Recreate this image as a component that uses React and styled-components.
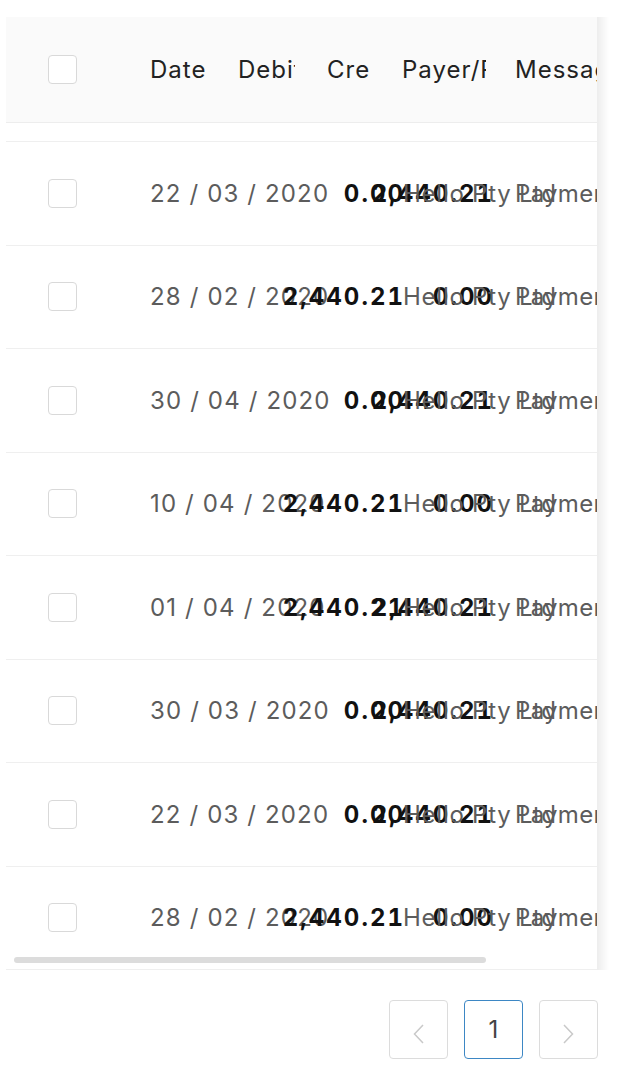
import styled, { createGlobalStyle } from 'styled-components'

const Global = createGlobalStyle`
  html, body { margin:0; padding:0; background:#fff; }
  body { font-family: Inter, "Noto Sans", sans-serif; -webkit-font-smoothing: antialiased; }
`

const Page = styled.div`width:620px; box-sizing:border-box; padding:17px 22px 0 6px;`

const Card = styled.div`
  position:relative; width:591px; background:#fff;
  &::after{content:''; position:absolute; top:0; bottom:0; right:-12px; width:12px; background:linear-gradient(to right, rgba(0,0,0,0.07), rgba(0,0,0,0));}
`
const Viewport = styled.div`overflow:hidden;`
const Table = styled.div`width:809px;`

const Head = styled.div`
  display:flex; align-items:center; height:106px; box-sizing:border-box;
  background:#fafafa; border-bottom:1px solid #ededed;
`
const HeadCell = styled.div`
  width:${p=>p.$w}px; flex:none; box-sizing:border-box; padding-right:${p=>p.$pad ?? 31}px;
  padding-left:${p=>p.$left || 0}px; display:flex; align-items:center;
`
const Label = styled.span`
  display:block; overflow:hidden; white-space:nowrap; font-size:24px; color:#222; letter-spacing:1px;
`
const Spacer = styled.div`height:19px; box-sizing:border-box; border-bottom:1px solid #efefef;`

const Row = styled.div`
  display:grid; grid-template-columns:144px 253px 89px 23px 300px; align-items:center;
  height:103.5px; box-sizing:border-box; border-bottom:1px solid #efefef;
`
const Check = styled.span`
  display:block; width:29px; height:29px; box-sizing:border-box; border:1.5px solid #d9d9d9; border-radius:4px; background:#fff;
`
const CheckCell = styled.div`grid-column:1; grid-row:1; padding-left:42px;`
const TextCell = styled.div`
  grid-column:${p=>p.$col}; grid-row:1; justify-self:start; white-space:nowrap;
  font-size:24px; color:#5c5c5c; letter-spacing:${p=>p.$ls ?? 0.75}px;
`
const AmountCell = styled.div`grid-column:${p=>p.$col}; grid-row:1; min-width:0; display:flex; justify-content:flex-end;`
const Amount = styled.span`
  flex:none; white-space:nowrap; font-size:24px; font-weight:700; color:#111;
  font-variant-numeric:tabular-nums; letter-spacing:2.05px; margin-right:-2.05px;
`
const ScrollBar = styled.div`position:absolute; left:8px; bottom:7px; width:472px; height:6px; border-radius:3px; background:#dcdcdc;`

const Pager = styled.div`display:flex; justify-content:flex-end; gap:16px; margin-top:30px;`
const PageButton = styled.div`
  width:59px; height:59px; box-sizing:border-box; border-radius:4px;
  border:1.5px solid ${p=>p.$active ? '#3d87c4' : '#dcdcdc'};
  display:flex; align-items:center; justify-content:center; color:#444; font-size:24px;
`
const Chevron = styled.svg`margin-top:9px;`

const rows = [
  ['22 / 03 / 2020','0.00','2,440.21'],
  ['28 / 02 / 2020','2,440.21','0.00'],
  ['30 / 04 / 2020','0.00','2,440.21'],
  ['10 / 04 / 2020','2,440.21','0.00'],
  ['01 / 04 / 2020','2,440.21','2,440.21'],
  ['30 / 03 / 2020','0.00','2,440.21'],
  ['22 / 03 / 2020','0.00','2,440.21'],
  ['28 / 02 / 2020','2,440.21','0.00'],
]

export default function App(){
  return (
    <Page>
      <Global/>
      <Card>
        <Viewport>
          <Table>
            <Head>
              <HeadCell $w={144} $left={42} $pad={0}><Check/></HeadCell>
              <HeadCell $w={88}><Label>Date</Label></HeadCell>
              <HeadCell $w={89} $pad={32}><Label>Debit</Label></HeadCell>
              <HeadCell $w={75} $pad={32}><Label>Credit</Label></HeadCell>
              <HeadCell $w={113} $pad={29}><Label>Payer/Payee</Label></HeadCell>
              <HeadCell $w={300}><Label>Message</Label></HeadCell>
            </Head>
            <Spacer/>
            {rows.map(([date,debit,credit],i)=>(
              <Row key={i}>
                <CheckCell><Check/></CheckCell>
                <TextCell $col={2} $ls={1.15}>{date}</TextCell>
                <AmountCell $col={2}><Amount>{debit}</Amount></AmountCell>
                <AmountCell $col={3}><Amount>{credit}</Amount></AmountCell>
                <TextCell $col="3 / span 2">Hello Pty Ltd</TextCell>
                <TextCell $col={5} $ls={0.3}>Payment</TextCell>
              </Row>
            ))}
          </Table>
        </Viewport>
        <ScrollBar/>
      </Card>
      <Pager>
        <PageButton>
          <Chevron width="11" height="20" viewBox="0 0 11 20"><polyline points="10,1 1.5,10 10,19" fill="none" stroke="#c9c9c9" strokeWidth="1.5"/></Chevron>
        </PageButton>
        <PageButton $active>1</PageButton>
        <PageButton>
          <Chevron width="11" height="20" viewBox="0 0 11 20"><polyline points="1,1 9.5,10 1,19" fill="none" stroke="#c9c9c9" strokeWidth="1.5"/></Chevron>
        </PageButton>
      </Pager>
    </Page>
  )
}
